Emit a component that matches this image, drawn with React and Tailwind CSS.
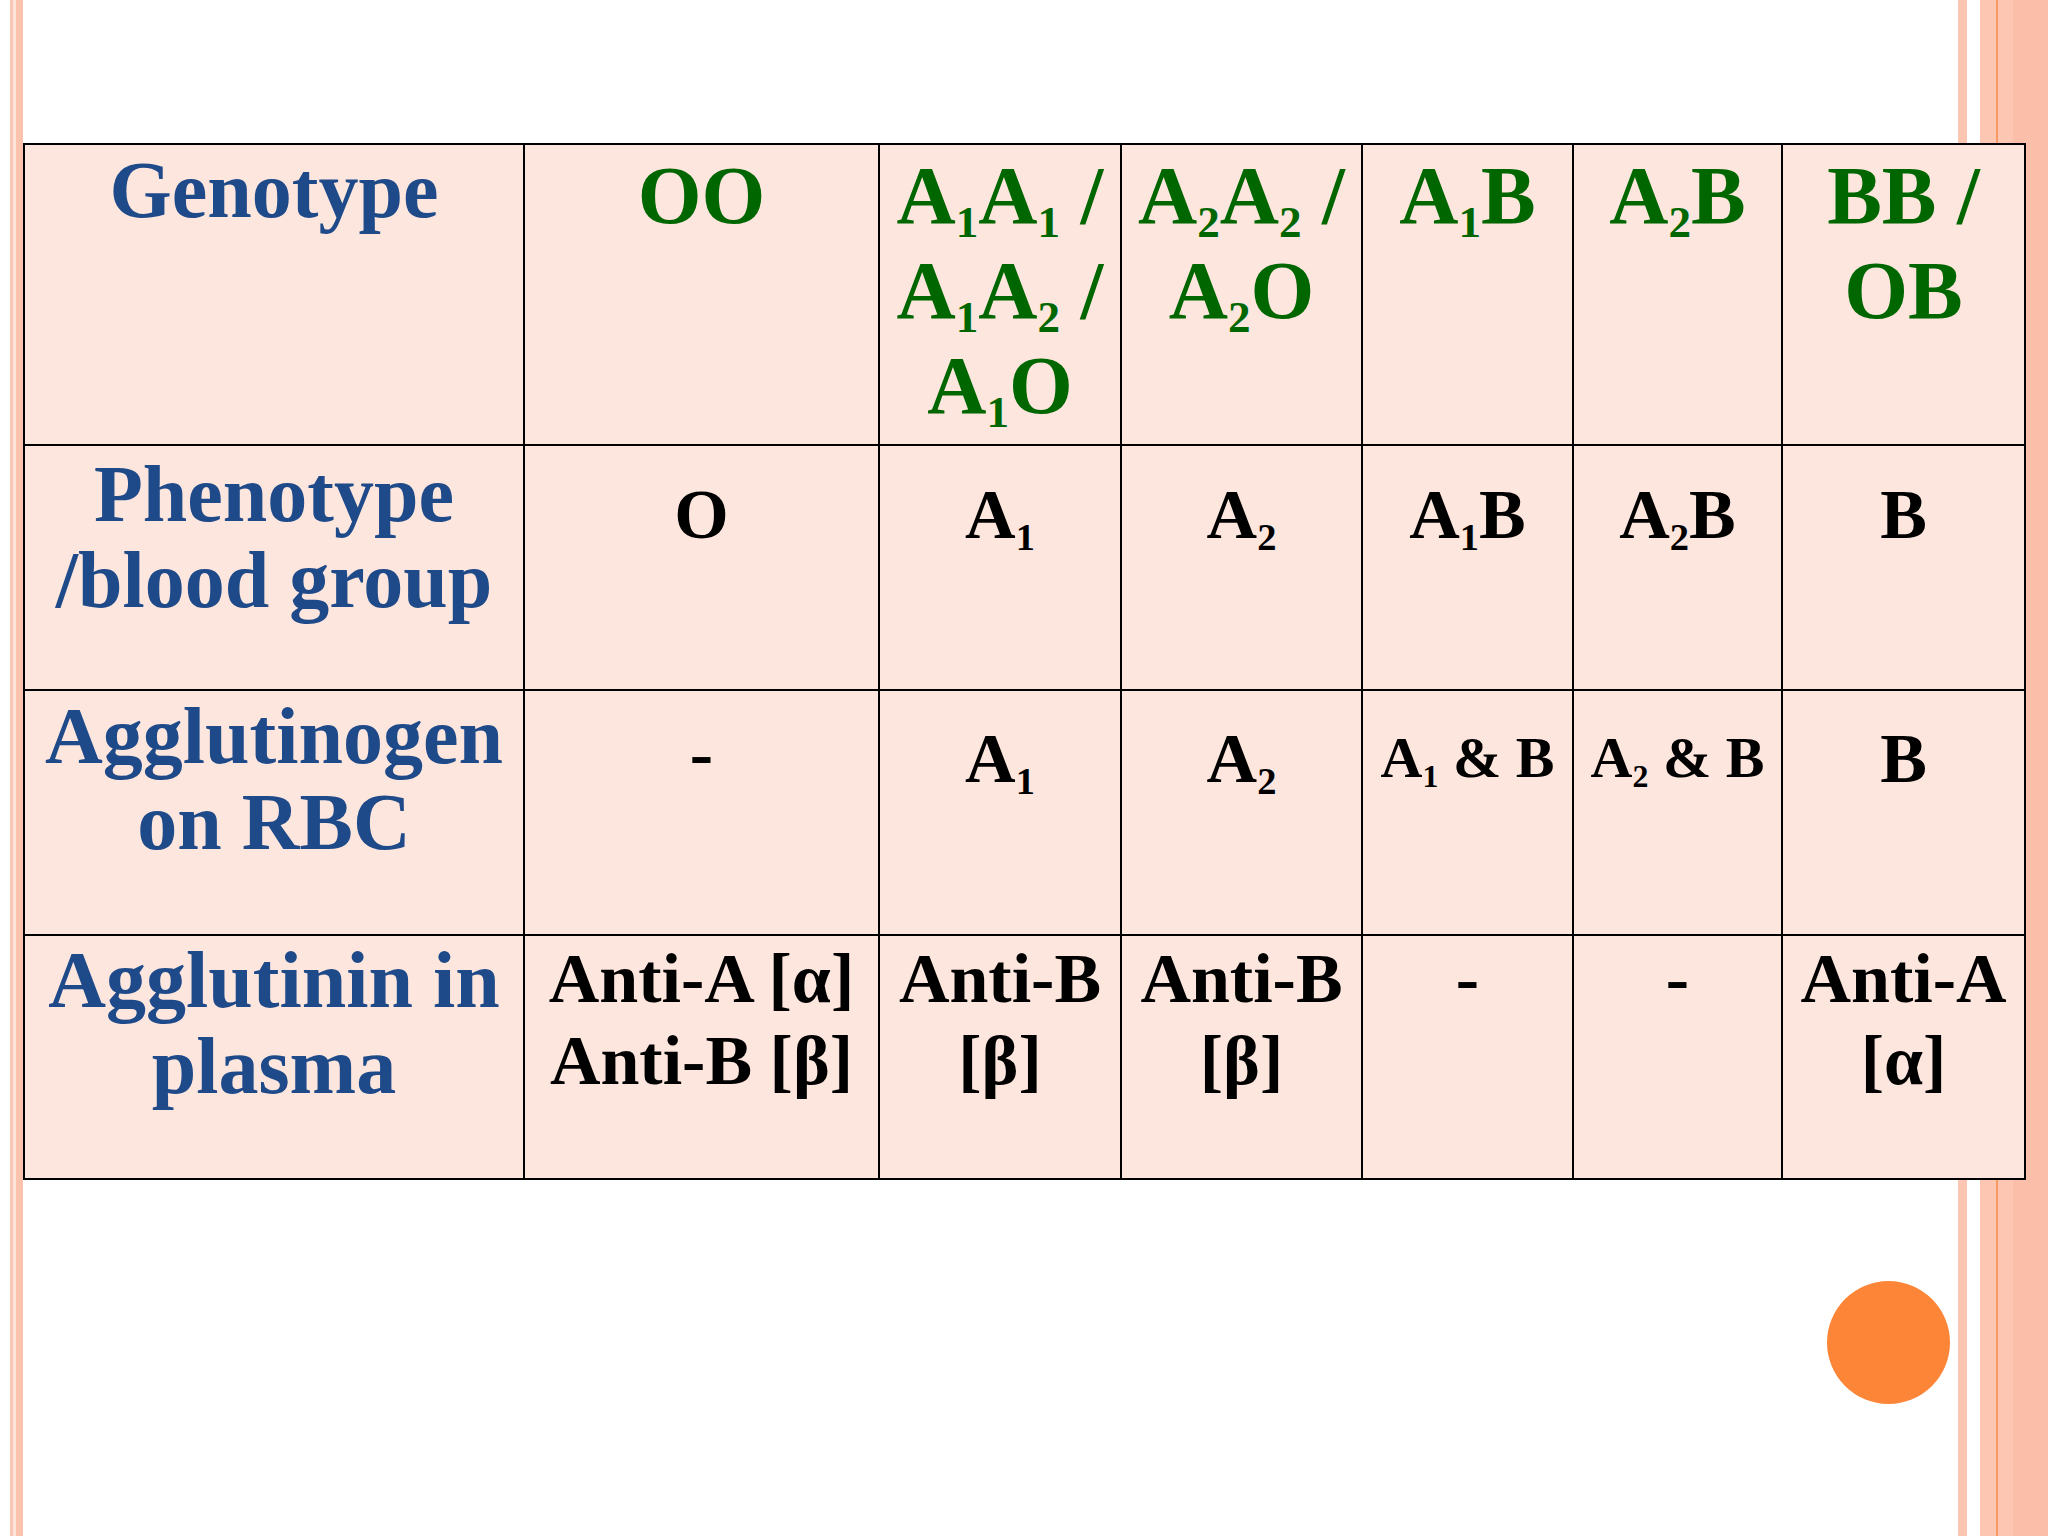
import React from 'react';

// Subscript digit used in genotype / phenotype labels
const Sub = ({ children }) => (
  <sub className="text-[0.55em] leading-none bottom-[-0.32em]">{children}</sub>
);

const blue = 'text-[#1f4a8a] text-[80px] leading-[86px]';
const green = 'text-[#006600] text-[82px] leading-[95px] pt-[3px]';
const black = 'text-black text-[70px] leading-[82px]';

const Cell = ({ className = '', children }) => (
  <td className={`border-2 border-black bg-[#fde6dd] align-top text-center font-bold px-1 whitespace-nowrap ${className}`}>
    {children}
  </td>
);

export default function App() {
  return (
    <div className="w-[2048px] h-[1536px] flex bg-white overflow-hidden font-['Liberation_Serif','Times_New_Roman',serif]">
      {/* left frame stripes */}
      <div className="flex h-full shrink-0">
        <div className="w-[10px]" />
        <div className="w-[3px] bg-[#f9c5b5]" />
        <div className="w-[3px] bg-[#fde3d9]" />
        <div className="w-[7px] bg-[#fbc2ad]" />
      </div>

      {/* slide body */}
      <div className="flex-1 flex flex-col pt-[143px] min-w-0">
        <table className="relative z-10 table-fixed border-collapse w-[2001px] shrink-0">
          <colgroup>
            <col className="w-[500px]" />
            <col className="w-[355px]" />
            <col className="w-[242px]" />
            <col className="w-[241px]" />
            <col className="w-[211px]" />
            <col className="w-[209px]" />
            <col className="w-[243px]" />
          </colgroup>
          <tbody>
            <tr className="h-[301px]">
              <Cell className={`${blue} pt-[2px]`}>Genotype</Cell>
              <Cell className={green}>OO</Cell>
              <Cell className={green}>
                A<Sub>1</Sub>A<Sub>1</Sub> /<br />
                A<Sub>1</Sub>A<Sub>2</Sub> /<br />
                A<Sub>1</Sub>O
              </Cell>
              <Cell className={green}>
                A<Sub>2</Sub>A<Sub>2</Sub> /<br />
                A<Sub>2</Sub>O
              </Cell>
              <Cell className={green}>A<Sub>1</Sub>B</Cell>
              <Cell className={green}>A<Sub>2</Sub>B</Cell>
              <Cell className={green}>
                BB /<br />
                OB
              </Cell>
            </tr>

            <tr className="h-[245px]">
              <Cell className={`${blue} pt-[5px]`}>
                Phenotype<br />
                /blood group
              </Cell>
              <Cell className={`${black} pt-[28px]`}>O</Cell>
              <Cell className={`${black} pt-[28px]`}>A<Sub>1</Sub></Cell>
              <Cell className={`${black} pt-[28px]`}>A<Sub>2</Sub></Cell>
              <Cell className={`${black} pt-[28px]`}>A<Sub>1</Sub>B</Cell>
              <Cell className={`${black} pt-[28px]`}>A<Sub>2</Sub>B</Cell>
              <Cell className={`${black} pt-[28px]`}>B</Cell>
            </tr>

            <tr className="h-[245px]">
              <Cell className={`${blue} pt-[2px]`}>
                Agglutinogen<br />
                on RBC
              </Cell>
              <Cell className={`${black} pt-[22px]`}>-</Cell>
              <Cell className={`${black} pt-[27px]`}>A<Sub>1</Sub></Cell>
              <Cell className={`${black} pt-[27px]`}>A<Sub>2</Sub></Cell>
              <Cell className="text-black text-[58px] leading-[82px] pt-[26px]">A<Sub>1</Sub> &amp; B</Cell>
              <Cell className="text-black text-[58px] leading-[82px] pt-[26px]">A<Sub>2</Sub> &amp; B</Cell>
              <Cell className={`${black} pt-[27px]`}>B</Cell>
            </tr>

            <tr className="h-[244px]">
              <Cell className={`${blue} pt-[1px]`}>
                Agglutinin in<br />
                plasma
              </Cell>
              <Cell className={`${black} pt-[2px]`}>
                Anti-A [α]<br />
                Anti-B [β]
              </Cell>
              <Cell className={`${black} pt-[2px]`}>
                Anti-B<br />
                [β]
              </Cell>
              <Cell className={`${black} pt-[2px]`}>
                Anti-B<br />
                [β]
              </Cell>
              <Cell className={`${black} pt-[2px]`}>-</Cell>
              <Cell className={`${black} pt-[2px]`}>-</Cell>
              <Cell className={`${black} pt-[2px]`}>
                Anti-A<br />
                [α]
              </Cell>
            </tr>
          </tbody>
        </table>

        <div className="self-end mr-[8px] mt-[101px] w-[123px] h-[123px] rounded-full bg-[#fd8537]" />
      </div>

      {/* right frame stripes */}
      <div className="flex h-full shrink-0">
        <div className="w-[9px] bg-[#fcc6b2]" />
        <div className="w-[13px] bg-white" />
        <div className="w-[16px] bg-[#fcc6b2]" />
        <div className="w-[2px] bg-[#f79a63]" />
        <div className="w-[15px] bg-[#fcc6b2]" />
        <div className="w-[35px] bg-[#fbbfa9]" />
      </div>
    </div>
  );
}
